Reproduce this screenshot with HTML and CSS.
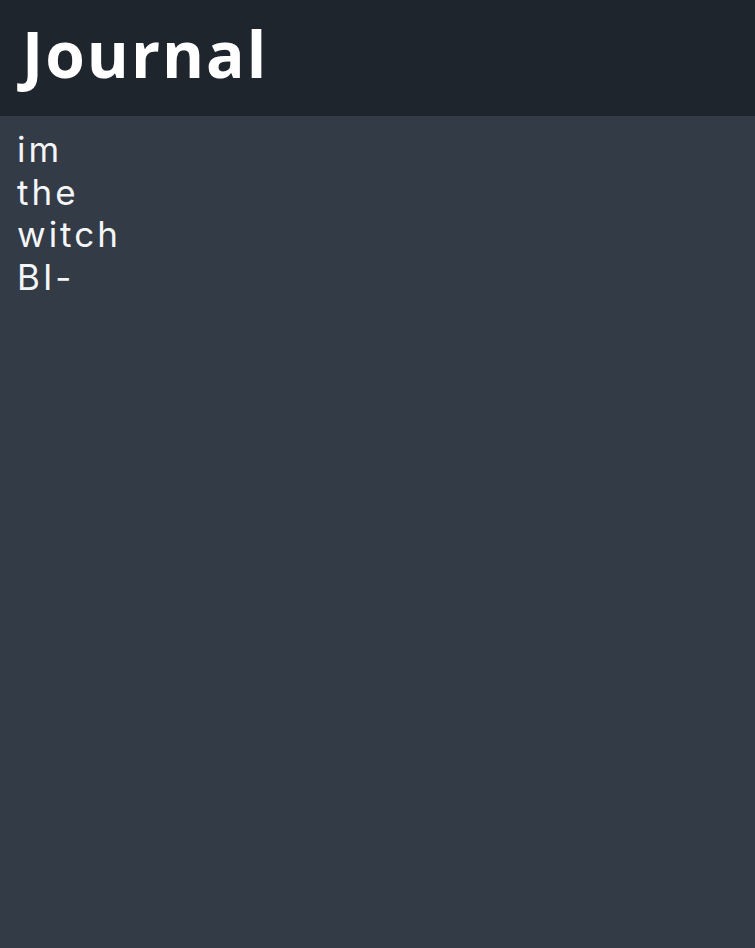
FILE: index.html
```html
<!DOCTYPE html>
<html lang="en">
<head>
  <meta charset="UTF-8">
  <meta name="viewport" content="width=device-width, initial-scale=1.0">
  <title>Journal</title>
  <link rel="stylesheet" href="styles.css">
</head>
<body>
  <div class="header">
    <h1>Journal</h1>
  </div>
  <div class="entry">
    <p>im</p>
    <p>the</p>
    <p>witch</p>
    <p>BI-</p>
  </div>
</body>
</html>
```

FILE: styles.css
```css
html, body {
  margin: 0;
  height: 100%;
}
body {
  font-family: Inter, "Open Sans", sans-serif;
  background: #323b46;
  color: #f4f5f6;
}
.header {
  background: #1f252d;
  height: 116px;
  padding: 0 22px;
  display: flex;
  align-items: center;
}
.header h1 {
  margin: 0 0 10px;
  font-family: "Open Sans", sans-serif;
  font-size: 64px;
  font-weight: 700;
  letter-spacing: 2px;
  color: #ffffff;
}
.entry {
  padding: 12px 17px;
}
.entry p {
  margin: 0;
  font-size: 35px;
  font-weight: 400;
  line-height: 42.7px;
  letter-spacing: 3px;
}
```
